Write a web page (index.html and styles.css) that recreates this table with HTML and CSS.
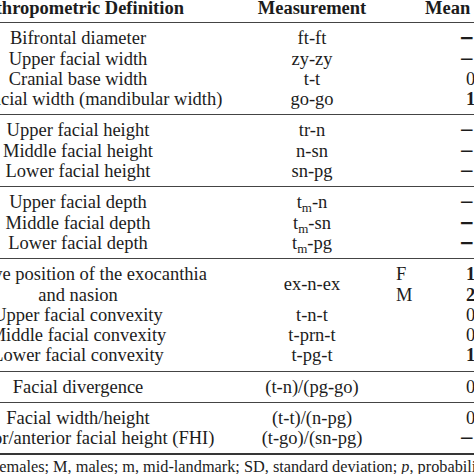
FILE: index.html
```html
<!DOCTYPE html>
<html lang="en">
<head>
<meta charset="utf-8">
<title>Anthropometric table</title>
<link rel="stylesheet" href="styles.css">
</head>
<body>
<div class="table">
  <div class="grid head">
    <div class="c def">Anthropometric Definition</div>
    <div class="c meas">Measurement</div>
    <div class="c sex"></div>
    <div class="c hmean">Mean ± SD</div>
  </div>

  <div class="grid group">
    <div class="c def">Bifrontal diameter</div>
    <div class="c meas">ft-ft</div>
    <div class="c sex"></div>
    <div class="c v n b"><span class="mi">−</span>0.45 ± 0.04</div>

    <div class="c def">Upper facial width</div>
    <div class="c meas">zy-zy</div>
    <div class="c sex"></div>
    <div class="c v n"><span class="mi">−</span>0.12 ± 0.03</div>

    <div class="c def">Cranial base width</div>
    <div class="c meas">t-t</div>
    <div class="c sex"></div>
    <div class="c v">0.07 ± 0.02</div>

    <div class="c def">Lower facial width (mandibular width)</div>
    <div class="c meas">go-go</div>
    <div class="c sex"></div>
    <div class="c v b">1.32 ± 0.06</div>
  </div>

  <div class="grid group">
    <div class="c def">Upper facial height</div>
    <div class="c meas">tr-n</div>
    <div class="c sex"></div>
    <div class="c v n"><span class="mi">−</span>0.21 ± 0.05</div>

    <div class="c def">Middle facial height</div>
    <div class="c meas">n-sn</div>
    <div class="c sex"></div>
    <div class="c v n"><span class="mi">−</span>0.18 ± 0.04</div>

    <div class="c def">Lower facial height</div>
    <div class="c meas">sn-pg</div>
    <div class="c sex"></div>
    <div class="c v n"><span class="mi">−</span>0.26 ± 0.05</div>
  </div>

  <div class="grid group">
    <div class="c def">Upper facial depth</div>
    <div class="c meas">t<sub>m</sub>-n</div>
    <div class="c sex"></div>
    <div class="c v n"><span class="mi">−</span>0.09 ± 0.03</div>

    <div class="c def">Middle facial depth</div>
    <div class="c meas">t<sub>m</sub>-sn</div>
    <div class="c sex"></div>
    <div class="c v n b"><span class="mi">−</span>0.33 ± 0.04</div>

    <div class="c def">Lower facial depth</div>
    <div class="c meas">t<sub>m</sub>-pg</div>
    <div class="c sex"></div>
    <div class="c v n b"><span class="mi">−</span>0.41 ± 0.05</div>
  </div>

  <div class="grid group">
    <div class="c def span2">Relative position of the exocanthia<br>and nasion</div>
    <div class="c meas span2">ex-n-ex</div>
    <div class="c sex">F</div>
    <div class="c v b">1.52 ± 0.07</div>
    <div class="c sex">M</div>
    <div class="c v b">2.11 ± 0.08</div>

    <div class="c def">Upper facial convexity</div>
    <div class="c meas">t-n-t</div>
    <div class="c sex"></div>
    <div class="c v">0.24 ± 0.03</div>

    <div class="c def">Middle facial convexity</div>
    <div class="c meas">t-prn-t</div>
    <div class="c sex"></div>
    <div class="c v">0.19 ± 0.02</div>

    <div class="c def">Lower facial convexity</div>
    <div class="c meas">t-pg-t</div>
    <div class="c sex"></div>
    <div class="c v b">1.05 ± 0.04</div>
  </div>

  <div class="grid group">
    <div class="c def">Facial divergence</div>
    <div class="c meas">(t-n)/(pg-go)</div>
    <div class="c sex"></div>
    <div class="c v">0.62 ± 0.03</div>
  </div>

  <div class="grid group last">
    <div class="c def">Facial width/height</div>
    <div class="c meas">(t-t)/(n-pg)</div>
    <div class="c sex"></div>
    <div class="c v">0.81 ± 0.04</div>

    <div class="c def">Posterior/anterior facial height (FHI)</div>
    <div class="c meas">(t-go)/(sn-pg)</div>
    <div class="c sex"></div>
    <div class="c v n"><span class="mi">−</span>0.14 ± 0.03</div>
  </div>
</div>
<p class="note">F, females; M, males; m, mid-landmark; SD, standard deviation; <i>p</i>, probability.</p>
</body>
</html>
```

FILE: styles.css
```css
html, body {
  margin: 0;
  padding: 0;
  background: #ffffff;
}
body {
  width: 474px;
  height: 474px;
  overflow: hidden;
  font-family: "Liberation Serif", "Times New Roman", serif;
  color: #1c1c1c;
}
.table {
  margin-top: -2px;
  margin-left: -72px;
  width: 697px;
  font-size: 18.5px;
  line-height: 20.3px;
}
.grid {
  display: grid;
  grid-template-columns: 300px 168px 29px 200px;
}
.head {
  font-weight: bold;
  padding-bottom: 4px;
}
.group {
  border-top: 1px solid #444444;
  padding: 5px 0 5px;
}
.group.last {
  border-bottom: 2px solid #363636;
  padding-bottom: 4px;
}
.c {
  white-space: nowrap;
}
.def, .meas {
  text-align: center;
}
.span2 {
  grid-row: span 2;
  align-self: center;
}
.sex {
  text-align: left;
}
.hmean {
  text-align: left;
}
.v {
  padding-left: 41px;
}
.v.n {
  padding-left: 34px;
}
.b {
  font-weight: bold;
}
.mi {
  font-family: "DejaVu Sans", sans-serif;
  font-weight: normal;
}
.b .mi {
  font-weight: bold;
}
sub {
  font-size: 13px;
  line-height: 0;
  vertical-align: -4px;
}
.note {
  margin: 0 0 0 -22px;
  padding-top: 3px;
  font-size: 16.3px;
  line-height: 18px;
  white-space: nowrap;
}
```
